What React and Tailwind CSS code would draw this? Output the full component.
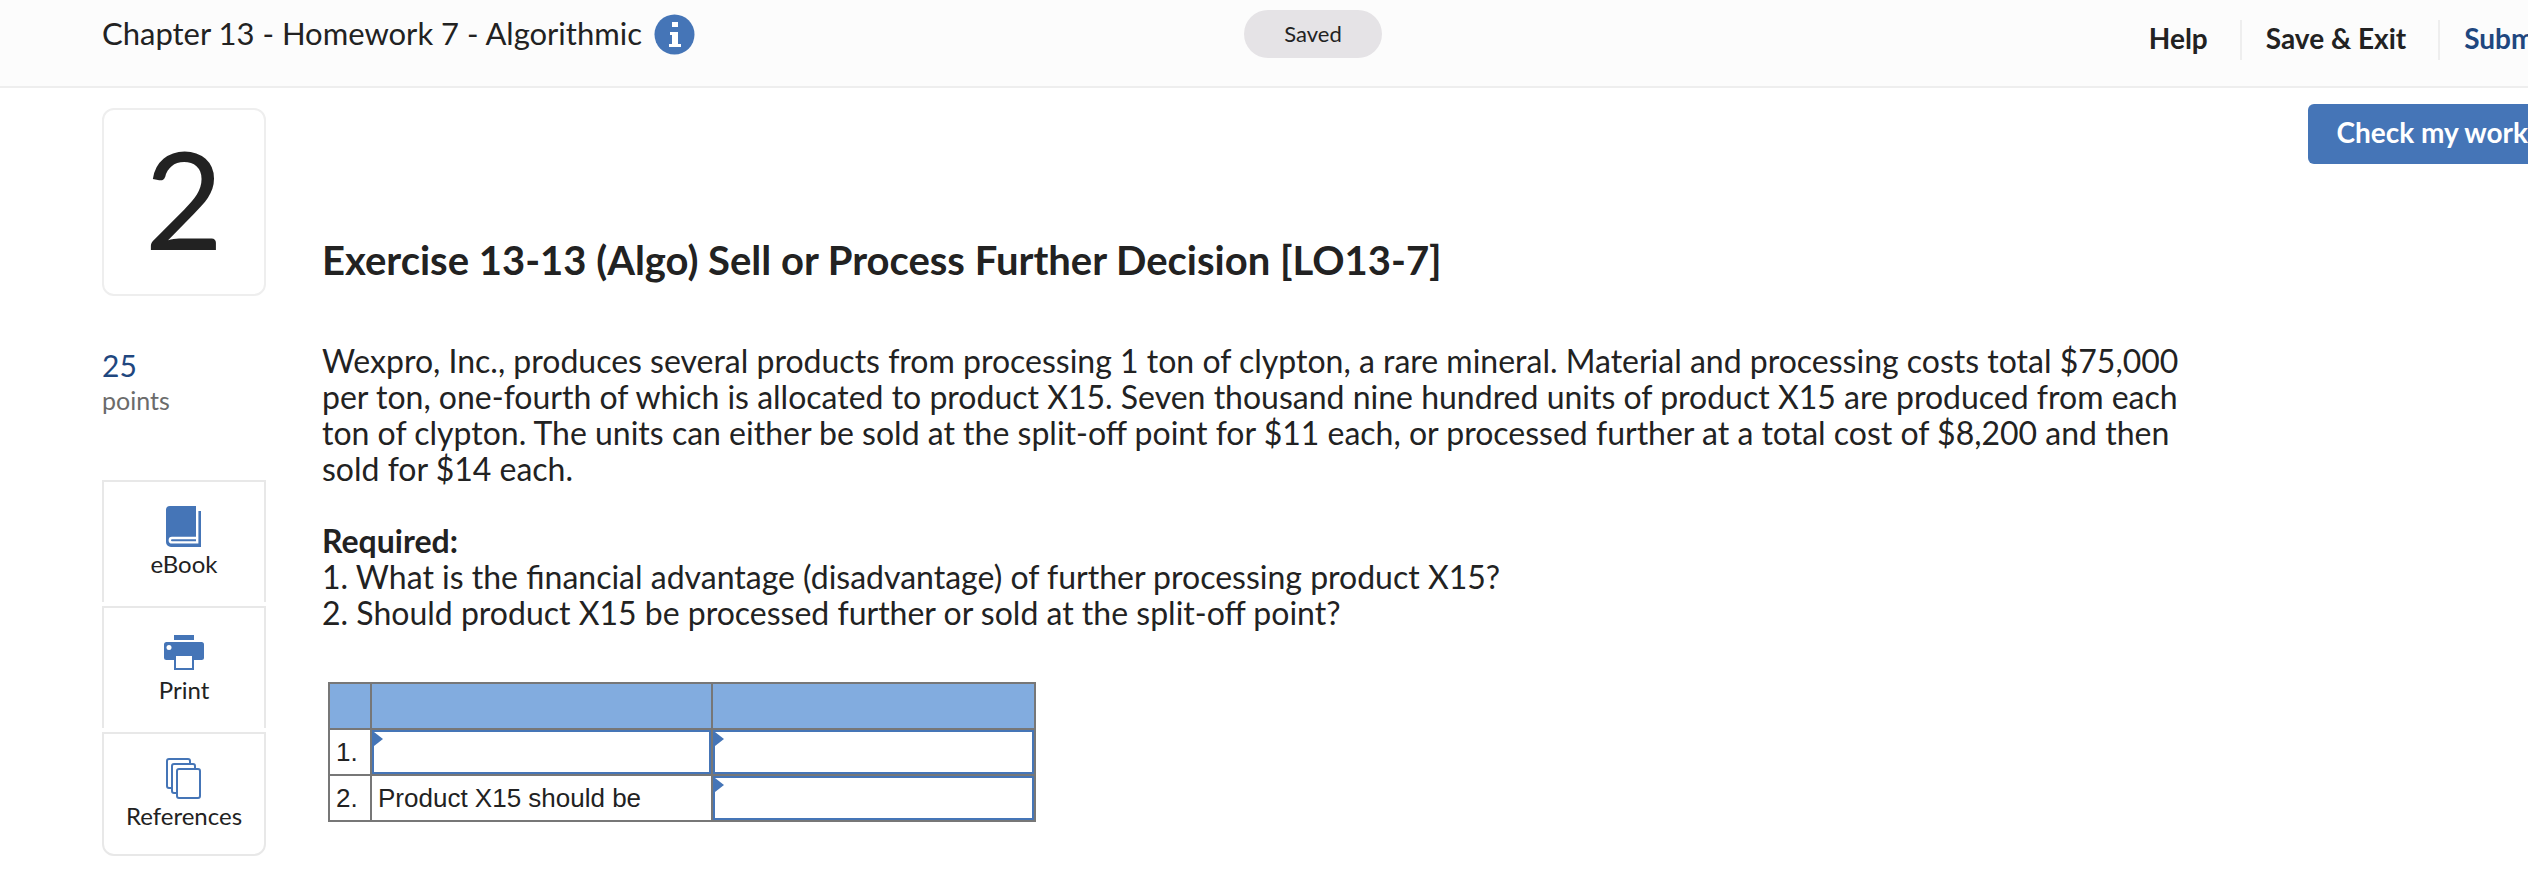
function InfoIcon() {
  return (
    <svg width="41" height="41" viewBox="0 0 41 41" aria-hidden="true">
      <circle cx="20.5" cy="20.5" r="20" fill="#4575b7" />
      <path d="M18 8h6v5h-6zM16 18h8v12h3v3H15v-3h3v-9h-2z" fill="#fff" />
    </svg>
  );
}

function BookIcon() {
  return (
    <svg width="40" height="42" viewBox="0 0 40 42" aria-hidden="true">
      <path d="M6 0H32V5H37V41H7a5 5 0 0 1-5-5V4a4 4 0 0 1 4-4z" fill="#4575b7" />
      <path d="M33.200 0V36.400H8a2.200 2.200 0 0 1 0-4.400H33" fill="none" stroke="#fff" strokeWidth="2.400" />
    </svg>
  );
}

function PrinterIcon() {
  return (
    <svg width="40" height="42" viewBox="0 0 40 42" aria-hidden="true">
      <path d="M10 3h20v5H10z" fill="#4575b7" />
      <rect x="0" y="10" width="40" height="18" rx="2.500" fill="#4575b7" />
      <circle cx="5" cy="15.500" r="2.500" fill="#fff" />
      <path d="M11 23h18v14H11z" fill="#fff" stroke="#4575b7" strokeWidth="2" />
    </svg>
  );
}

function PagesIcon() {
  return (
    <svg width="40" height="42" viewBox="0 0 40 42" aria-hidden="true">
      <g fill="#fff" stroke="#4575b7" strokeWidth="2">
        <rect x="3" y="1" width="23" height="29" rx="2" />
        <rect x="8" y="6" width="23" height="29" rx="2" />
        <rect x="13" y="11" width="23" height="29" rx="2" />
      </g>
    </svg>
  );
}

function Tool({ icon, label, last }) {
  return (
    <button
      type="button"
      className={
        "flex w-full flex-col items-center border-2 border-[#e8e8e8] pt-6 text-2xl leading-8 " +
        (last ? "h-[124px] rounded-b-xl" : "h-[122px] border-b-0")
      }
    >
      {icon}
      <span>{label}</span>
    </button>
  );
}

function AnswerCell({ label }) {
  return (
    <td className="relative border-2 border-[#777777] p-0">
      <input
        type="text"
        aria-label={label}
        className="block h-11 w-full border-2 border-[#4575b7] bg-white px-3 text-[26px] outline-none"
      />
      <svg className="absolute top-0.5 left-0" width="11" height="14" viewBox="0 0 11 14" aria-hidden="true">
        <path d="M0 0h2l9 7-9 7H0z" fill="#4575b7" />
      </svg>
    </td>
  );
}

export default function App() {
  return (
    <div className="overflow-x-hidden bg-white font-[Lato,sans-serif] text-[#222222]">
      <div className="-mr-[98px]">
        <header className="grid h-[88px] grid-cols-[1fr_auto_1fr] items-start border-b-2 border-[#eeeeee] bg-[#fcfcfc] pl-[102px]">
          <div className="flex items-start gap-3 pt-3">
            <h1 className="text-[31px] leading-[42px]">Chapter 13 - Homework 7 - Algorithmic</h1>
            <button type="button" aria-label="Assignment information" className="mt-0.5">
              <InfoIcon />
            </button>
          </div>
          <div className="-ml-[102px] pt-2.5">
            <div className="rounded-full bg-[#e5e3e6] px-10 pt-2 pb-2 text-[22px] leading-8">Saved</div>
          </div>
          <nav className="flex justify-end pt-5 pr-[74px] text-[28px] leading-9 font-bold whitespace-nowrap">
            <a href="#help" className="pr-8">Help</a>
            <a href="#save" className="h-10 border-l-2 border-[#eeeeee] pr-8 pl-6">Save &amp; Exit</a>
            <a href="#submit" className="h-10 border-l-2 border-[#eeeeee] pl-6 text-[#1f477f]">Submit</a>
          </nav>
        </header>

        <main className="flex items-start pt-4 pr-[70px] pb-4 pl-[102px]">
          <aside className="w-[164px] shrink-0 pt-1">
            <div className="flex h-[188px] items-center justify-center rounded-xl border-2 border-[#eeeeee] pb-2 text-[136px] leading-none">
              2
            </div>
            <div className="mt-[50px] text-[30px] leading-[38px] text-[#1f477f]">25</div>
            <div className="text-[25px] leading-8 text-[#6b6b6b]">points</div>
            <div className="mt-16 flex flex-col gap-1">
              <Tool icon={<BookIcon />} label="eBook" />
              <Tool icon={<PrinterIcon />} label="Print" />
              <Tool icon={<PagesIcon />} label="References" last />
            </div>
          </aside>

          <article className="ml-14 flex-1 pt-[132px] text-[32px] leading-9">
            <h2 className="text-[40px] leading-[48px] font-bold">
              Exercise 13-13 (Algo) Sell or Process Further Decision [LO13-7]
            </h2>
            <p className="mt-[59px] max-w-[1872px]">
              Wexpro, Inc., produces several products from processing 1 ton of clypton, a rare mineral. Material and
              processing costs total $75,000 per ton, one-fourth of which is allocated to product X15. Seven thousand
              nine hundred units of product X15 are produced from each ton of clypton. The units can either be sold at
              the split-off point for $11 each, or processed further at a total cost of $8,200 and then sold for $14
              each.
            </p>
            <h3 className="mt-9 font-bold">Required:</h3>
            <p>1. What is the financial advantage (disadvantage) of further processing product X15?</p>
            <p>2. Should product X15 be processed further or sold at the split-off point?</p>

            <table className="mt-[51px] ml-1.5 w-[708px] table-fixed border-collapse font-['Liberation_Sans',sans-serif] text-[26px] leading-8">
              <colgroup>
                <col className="w-[42px]" />
                <col className="w-[341px]" />
                <col />
              </colgroup>
              <thead>
                <tr className="h-[46px] bg-[#82acdf]">
                  <th className="border-2 border-[#777777]" />
                  <th className="border-2 border-[#777777]" />
                  <th className="border-2 border-[#777777]" />
                </tr>
              </thead>
              <tbody>
                <tr className="h-[46px]">
                  <td className="border-2 border-[#777777] p-0 pl-1.5">1.</td>
                  <AnswerCell label="Item 1 description" />
                  <AnswerCell label="Item 1 amount" />
                </tr>
                <tr className="h-[46px]">
                  <td className="border-2 border-[#777777] p-0 pl-1.5">2.</td>
                  <td className="border-2 border-[#777777] p-0 pl-1.5">Product X15 should be</td>
                  <AnswerCell label="Product X15 should be" />
                </tr>
              </tbody>
            </table>
          </article>

          <button
            type="button"
            className="shrink-0 rounded-md bg-[#4575b7] px-7 pt-3 pb-4 text-[28px] leading-8 font-bold whitespace-nowrap text-white"
          >
            Check my work
          </button>
        </main>
      </div>
    </div>
  );
}
